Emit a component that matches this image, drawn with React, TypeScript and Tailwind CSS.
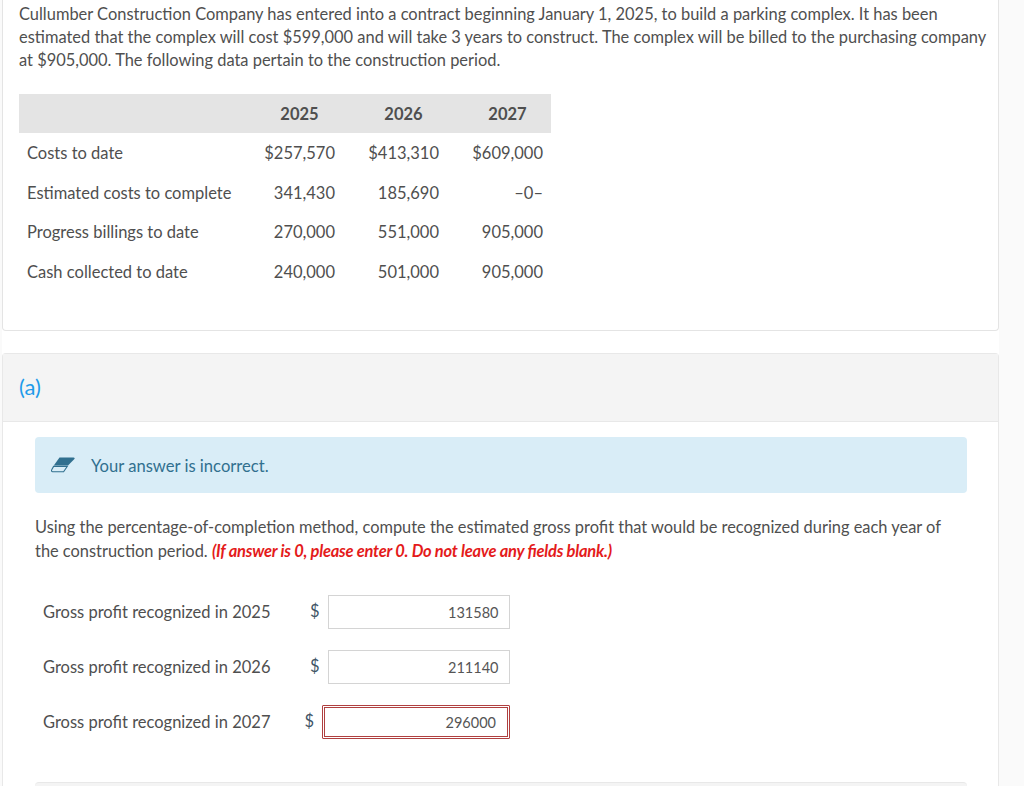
const rows = [
  ["Costs to date", "$257,570", "$413,310", "$609,000"],
  ["Estimated costs to complete", "341,430", "185,690", "–0–"],
  ["Progress billings to date", "270,000", "551,000", "905,000"],
  ["Cash collected to date", "240,000", "501,000", "905,000"],
];

function Eraser() {
  return (
    <svg width="24" height="16" viewBox="0 0 24 16" className="block">
      <path d="M8.5 0.5H22.5C23.6 0.5 24 1.3 23.4 2L17 8.6H2.8Z" fill="#31708f" />
      <path d="M2.6 9.4H16.3L12.6 14.7H1.6C0.6 14.7 0.2 13.6 0.7 12.8Z" fill="none" stroke="#31708f" strokeWidth="1.1" />
    </svg>
  );
}

function Answer({ label, value, wrong }: { label: string; value: string; wrong?: boolean }) {
  return (
    <div className="flex items-center h-[34px]">
      <div className="w-[227.5px] pt-[1px] text-[16.5px] text-[#4f4f4f] whitespace-nowrap">{label}</div>
      {wrong ? (
        <>
          <div className="w-[11px] text-[16.5px] text-[#3f5566] leading-none mt-[-2px] ml-[34px]">$</div>
          <div className="ml-[6.5px] w-[188px] h-[34px] border border-[#b04040] p-[1px] rounded-[1px]">
            <div className="h-full border border-[#b04040] flex items-center justify-end pt-[1px] pr-[11px] text-[14.5px] text-[#555]">{value}</div>
          </div>
        </>
      ) : (
        <>
          <div className="w-[11px] text-[16.5px] text-[#3f5566] leading-none mt-[-2px] ml-[39.5px]">$</div>
          <div className="ml-[7px] w-[182px] h-[34px] border border-[#d4d4d4] flex items-center justify-end pt-[1px] pr-[10.5px] text-[14.5px] text-[#555]">{value}</div>
        </>
      )}
    </div>
  );
}

export default function App() {
  return (
    <div className="w-[1024px] h-[786px] overflow-hidden bg-[#fafafa] pl-[2px] font-['Lato','Carlito',sans-serif]">
      <div className="w-[997px] h-full bg-white">
        <div className="h-[331px] bg-white border border-t-0 border-[#e4e4e4] rounded-b-[4px] pl-[16px] pt-[2px]">
          <p className="w-[975px] text-[16.43px] leading-[23px] text-[#4f4f4f]">
            Cullumber Construction Company has entered into a contract beginning January 1, 2025, to build a parking complex. It has been estimated that the complex will cost $599,000 and will take 3 years to construct. The complex will be billed to the purchasing company at $905,000. The following data pertain to the construction period.
          </p>
          <table className="mt-[23px] w-[532px] border-collapse text-[16.5px] text-[#4f4f4f] table-fixed">
            <thead>
              <tr className="h-[39px] bg-[#e4e4e4]">
                <th className="w-[220px]" />
                <th className="w-[104px] text-center font-bold pl-[25px] pr-[8px] pt-[2px]">2025</th>
                <th className="w-[104px] text-center font-bold pl-[25px] pr-[8px] pt-[2px]">2026</th>
                <th className="w-[104px] text-center font-bold pl-[25px] pr-[8px] pt-[2px]">2027</th>
              </tr>
            </thead>
            <tbody>
              {rows.map((r) => (
                <tr key={r[0]} className="h-[39.5px]">
                  <td className="pl-[8px] pt-[2px] whitespace-nowrap">{r[0]}</td>
                  {r.slice(1).map((v, i) => (
                    <td key={i} className="text-right pr-[8px] pt-[2px]">{v}</td>
                  ))}
                </tr>
              ))}
            </tbody>
          </table>
        </div>
        <div className="mt-[22px] h-[440px] border border-b-0 border-[#e8e8e8] rounded-t-[4px]">
          <div className="h-[68px] bg-[#f4f4f4] border-b border-[#e8e8e8] pl-[16px] pt-[18px] text-[22px] leading-[30px] text-[#1e9bea]">(a)</div>
          <div className="pl-[32px] pr-[30px] pt-[15px]">
            <div className="h-[56px] w-[932px] bg-[#d9edf7] rounded-[4px] flex items-center pl-[16px] text-[#31708f] text-[16.6px]">
              <Eraser />
              <span className="ml-[16px] mt-[2px]">Your answer is incorrect.</span>
            </div>
            <p className="mt-[22px] w-[925px] text-[16.4px] leading-[24px] text-[#4f4f4f]">
              Using the percentage-of-completion method, compute the estimated gross profit that would be recognized during each year of the construction period.{" "}
              <span className="font-bold italic text-[#e41b1b] text-[16.5px] tracking-[-0.23px] [font-feature-settings:'liga'_1]">(If answer is 0, please enter 0. Do not leave any fields blank.)</span>
            </p>
            <div className="mt-[32px] pl-[8px] flex flex-col gap-[21px]">
              <Answer label="Gross profit recognized in 2025" value="131580" />
              <Answer label="Gross profit recognized in 2026" value="211140" />
              <Answer label="Gross profit recognized in 2027" value="296000" wrong />
            </div>
            <div className="mt-[43px] w-[932px] h-[20px] bg-[#f4f4f4] border-t border-[#e8e8e8] rounded-t-[4px]" />
          </div>
        </div>
      </div>
    </div>
  );
}
